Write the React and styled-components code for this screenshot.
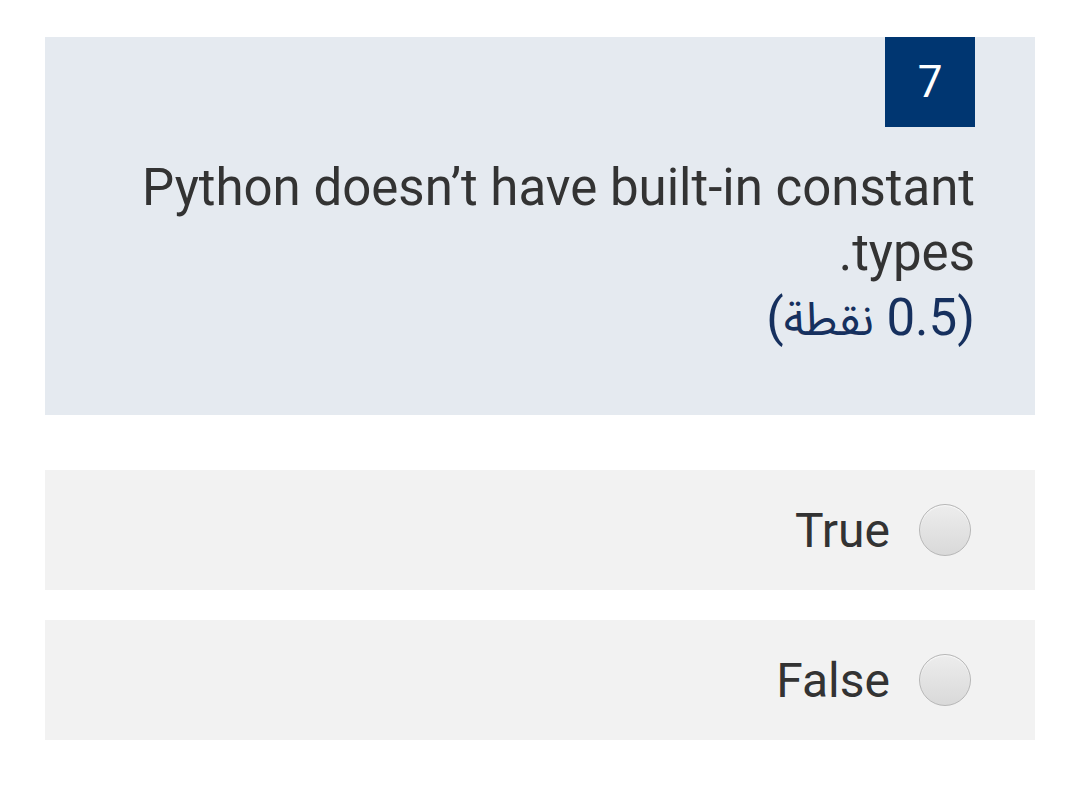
import React from "react";
import styled, { createGlobalStyle } from "styled-components";

const Global = createGlobalStyle`
  html, body { margin: 0; padding: 0; background: #ffffff; }
  body { font-family: Roboto, "Noto Sans", "Noto Sans Arabic", "DejaVu Sans", sans-serif; }
`;

const Page = styled.div`
  width: 1080px;
  padding: 37px 45px 0;
  box-sizing: border-box;
  display: flex;
  flex-direction: column;
`;

const QuestionCard = styled.div`
  background: #e5eaf0;
  padding: 0 60px 65px 60px;
  display: flex;
  flex-direction: column;
  align-items: flex-start;
  direction: rtl;
`;

const Badge = styled.div`
  width: 90px;
  height: 90px;
  background: #003671;
  color: #ffffff;
  font-size: 44px;
  display: flex;
  align-items: center;
  justify-content: center;
  margin-bottom: 28px;
`;

const QuestionText = styled.div`
  font-size: 51px;
  line-height: 65px;
  color: #333333;
  text-align: right;
  direction: rtl;
  width: 100%;
`;

const Points = styled.div`
  color: #16305e;
  height: 65px;
`;

const ArabicWord = styled.span`
  font-size: 46px;
`;

const Options = styled.div`
  margin-top: 55px;
  display: flex;
  flex-direction: column;
  gap: 30px;
`;

const Option = styled.label`
  height: 120px;
  background: #f2f2f2;
  display: flex;
  align-items: center;
  direction: rtl;
  padding-right: 64px;
  gap: 29px;
  cursor: pointer;
`;

const Radio = styled.span`
  width: 50px;
  height: 50px;
  border-radius: 50%;
  border: 1px solid #b7b7b7;
  background: linear-gradient(#ededed, #d9d9d9);
  box-shadow: inset 0 1px 1px rgba(255,255,255,0.7);
  flex: none;
`;

const OptionLabel = styled.span`
  font-size: 48px;
  color: #333333;
`;

export default function App() {
  return (
    <>
      <Global />
      <Page>
        <QuestionCard>
          <Badge>7</Badge>
          <QuestionText>
            <div>Python doesn’t have built-in constant types.</div>
            <Points>(0.5 <ArabicWord>نقطة</ArabicWord>)</Points>
          </QuestionText>
        </QuestionCard>
        <Options>
          <Option>
            <Radio />
            <OptionLabel>True</OptionLabel>
          </Option>
          <Option>
            <Radio />
            <OptionLabel>False</OptionLabel>
          </Option>
        </Options>
      </Page>
    </>
  );
}
